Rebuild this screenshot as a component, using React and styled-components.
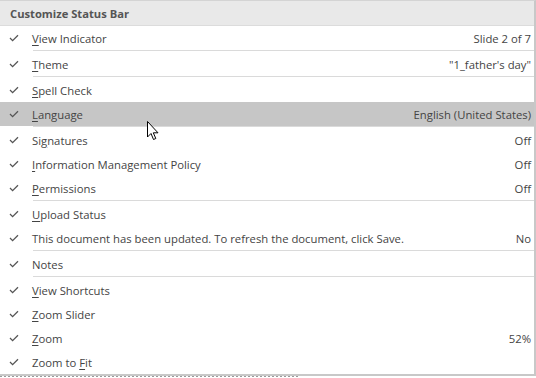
import styled, { createGlobalStyle } from 'styled-components';

const GlobalStyle = createGlobalStyle`
    html, body {
        margin: 0;
        padding: 0;
        background: #ffffff;
    }
    body {
        font-family: "Open Sans", "Noto Sans", sans-serif;
        font-size: 11.3px;
        color: #444444;
    }
`;

// groups of items; a separator is drawn between groups
const groups = [
    [{ label: 'View Indicator', key: 0, value: 'Slide 2 of 7' }],
    [{ label: 'Theme', key: 0, value: '"1_father\'s day"' }],
    [
        { label: 'Spell Check', key: 0 },
        { label: 'Language', key: 0, value: 'English (United States)', hover: true },
    ],
    [
        { label: 'Signatures', key: 2, value: 'Off' },
        { label: 'Information Management Policy', key: 0, value: 'Off' },
        { label: 'Permissions', key: 0, value: 'Off' },
    ],
    [
        { label: 'Upload Status', key: 0 },
        { label: 'This document has been updated. To refresh the document, click Save.', value: 'No' },
    ],
    [{ label: 'Notes' }],
    [
        { label: 'View Shortcuts', key: 0 },
        { label: 'Zoom Slider', key: 0 },
        { label: 'Zoom', key: 0, value: '52%' },
        { label: 'Zoom to Fit', key: 8 },
    ],
];

const Menu = styled.div`
    position: relative;
    width: 534px;
    border-top: 1px solid #d4d4d4;
    border-right: 2px solid #c8c8c8;
    border-bottom: 2px solid #c8c8c8;
    background: #ffffff;
`;

const Header = styled.div`
    height: 24px;
    display: flex;
    align-items: center;
    padding-left: 10px;
    background: #e9e9e9;
    border-bottom: 1px solid #dcdcdc;
    font-size: 11.2px;
    font-weight: 700;
    color: #555555;
`;

const Row = styled.div`
    height: 24px;
    display: flex;
    align-items: center;
    padding-right: 3px;
    background: ${(p) => (p.$hover ? '#c6c6c6' : 'transparent')};
    color: #444444;
`;

const Check = styled.span`
    width: 32px;
    display: flex;
    justify-content: center;
    padding-right: 4px;
    box-sizing: border-box;
`;

const Label = styled.span`
    flex: 1;
    white-space: nowrap;
`;

const Key = styled.span`
    text-decoration: underline;
    text-underline-offset: 2px;
`;

const Value = styled.span`
    white-space: nowrap;
`;

const Separator = styled.div`
    height: 2px;
    margin-left: 33px;
    border-top: 1px solid #dadada;
    box-sizing: border-box;
`;

const Remnant = styled.div`
    width: 300px;
    height: 1px;
    background: repeating-linear-gradient(90deg, #9a9a9a 0 2px, transparent 2px 4px);
`;

const Cursor = styled.svg`
    position: absolute;
    left: 147px;
    top: 120px;
`;

function CheckMark() {
    return (
        <svg width="10" height="8" viewBox="0 0 10 8">
            <path d="M1 4 L3.6 6.6 L9 1.2" fill="none" stroke="#555" strokeWidth="1.3" />
        </svg>
    );
}

function ItemLabel({ label, k }) {
    if (k === undefined) return <Label>{label}</Label>;
    return (
        <Label>
            {label.slice(0, k)}
            <Key>{label[k]}</Key>
            {label.slice(k + 1)}
        </Label>
    );
}

export default function App() {
    return (
        <>
            <GlobalStyle />
            <Menu>
                <Header>Customize Status Bar</Header>
                {groups.map((group, gi) => (
                    <div key={gi}>
                        {gi > 0 && <Separator />}
                        {group.map((item) => (
                            <Row key={item.label} $hover={item.hover}>
                                <Check><CheckMark /></Check>
                                <ItemLabel label={item.label} k={item.key} />
                                {item.value && <Value>{item.value}</Value>}
                            </Row>
                        ))}
                    </div>
                ))}
                <Cursor width="12" height="20" viewBox="0 0 12 20">
                    <path d="M0.5 0.5 L0.5 16 L4 12.5 L6.5 18.5 L8.8 17.5 L6.3 11.8 L11 11.8 Z" fill="#fff" stroke="#000" strokeWidth="1" />
                </Cursor>
            </Menu>
            <Remnant />
        </>
    );
}
